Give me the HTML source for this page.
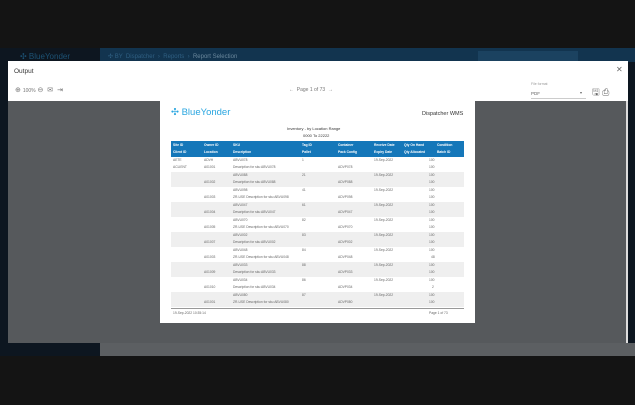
<!DOCTYPE html>
<html><head><style>
*{margin:0;padding:0;box-sizing:border-box}
body{width:635px;height:405px;background:#141414;position:relative;overflow:hidden;font-family:"Liberation Sans",sans-serif}
.abs{position:absolute}
.t{position:absolute;font-size:3.3px;color:#666;white-space:nowrap}
.h{position:absolute;font-size:3.3px;color:#fff;font-weight:bold;white-space:nowrap}
</style></head><body>
<div class="abs" style="left:0;top:48px;width:635px;height:308px;background:#0d1620"></div>
<div class="abs" style="left:100px;top:48px;width:535px;height:14px;background:#12344f"></div>
<div class="abs" style="left:20px;top:52px;font-size:8px;color:#1d5274">✣ BlueYonder</div>
<div class="abs" style="left:108px;top:53px;font-size:6px;color:#2f5f82">✣ BY &nbsp;Dispatcher &nbsp;› &nbsp;Reports &nbsp;› &nbsp;<span style="color:#6a879c">Report Selection</span></div>
<div class="abs" style="left:478px;top:51px;width:100px;height:11px;background:#1b4260"></div>
<div class="abs" style="left:100px;top:343px;width:535px;height:13px;background:#5c5f62"></div>
<!-- modal -->
<div class="abs" style="left:8px;top:61px;width:620px;height:40px;background:#fff"></div>
<div class="abs" style="left:14px;top:68px;font-size:6.5px;color:#333">Output</div>
<div class="abs" style="left:616px;top:65px;font-size:8px;color:#666">✕</div>
<div class="abs" style="left:15px;top:86px;font-size:7px;color:#777">⊕ <span style="font-size:5px">100%</span> ⊖ &nbsp;✉ &nbsp;⇥</div>
<div class="abs" style="left:289px;top:87px;font-size:5px;color:#777">← &nbsp;Page 1 of 73 &nbsp;→</div>
<div class="abs" style="left:531px;top:82px;font-size:3.5px;color:#999">File format</div>
<div class="abs" style="left:531px;top:91px;font-size:4.5px;color:#666">PDF</div>
<div class="abs" style="left:531px;top:98px;width:55px;height:1px;background:#ccc"></div>
<div class="abs" style="left:580px;top:90px;font-size:4px;color:#666">▾</div>
<div class="abs" style="left:592px;top:85px;font-size:9px;color:#666">🖫 ⎙</div>
<div class="abs" style="left:8px;top:101px;width:620px;height:242px;background:#56595c"></div>
<div class="abs" style="left:626px;top:101px;width:2px;height:242px;background:#ddd"></div>
<!-- page -->
<div class="abs" style="left:160px;top:101px;width:315px;height:222px;background:#fff"></div>
<div class="abs" style="left:171px;top:107px;font-size:9.5px;color:#2aa6e0">✣ BlueYonder</div>
<div class="abs" style="left:422px;top:111px;font-size:5.5px;color:#333">Dispatcher WMS</div>
<div class="abs" style="left:287px;top:126px;font-size:4px;color:#333">Inventory - by Location Range</div>
<div class="abs" style="left:303px;top:133px;font-size:4px;color:#333">0000 To 22222</div>
<div class="abs" style="left:171px;top:141px;width:293px;height:16px;background:#1577b9"></div>
<div class="h" style="left:173px;top:143px">Site ID</div><div class="h" style="left:173px;top:150px">Client ID</div>
<div class="h" style="left:204px;top:143px">Owner ID</div><div class="h" style="left:204px;top:150px">Location</div>
<div class="h" style="left:233px;top:143px">SKU</div><div class="h" style="left:233px;top:150px">Description</div>
<div class="h" style="left:302px;top:143px">Tag ID</div><div class="h" style="left:302px;top:150px">Pallet</div>
<div class="h" style="left:338px;top:143px">Container</div><div class="h" style="left:338px;top:150px">Pack Config</div>
<div class="h" style="left:374px;top:143px">Receive Date</div><div class="h" style="left:374px;top:150px">Expiry Date</div>
<div class="h" style="left:404px;top:143px">Qty On Hand</div><div class="h" style="left:404px;top:150px">Qty Allocated</div>
<div class="h" style="left:437px;top:143px">Condition</div><div class="h" style="left:437px;top:150px">Batch ID</div>
<div class="abs" style="left:171px;top:172px;width:293px;height:15px;background:#efefef"></div>
<div class="abs" style="left:171px;top:202px;width:293px;height:15px;background:#efefef"></div>
<div class="abs" style="left:171px;top:232px;width:293px;height:15px;background:#efefef"></div>
<div class="abs" style="left:171px;top:262px;width:293px;height:15px;background:#efefef"></div>
<div class="abs" style="left:171px;top:292px;width:293px;height:15px;background:#efefef"></div>
<div class="t" style="left:173px;top:158px">AETE</div><div class="t" style="left:173px;top:165px">ACLIENT</div>
<div class="t" style="left:204px;top:158px">ADVH</div>
<div class="t" style="left:204px;top:165px">A01001</div>
<div class="t" style="left:204px;top:180px">A01002</div>
<div class="t" style="left:204px;top:195px">A01003</div>
<div class="t" style="left:204px;top:210px">A01004</div>
<div class="t" style="left:204px;top:225px">A01005</div>
<div class="t" style="left:204px;top:240px">A01007</div>
<div class="t" style="left:204px;top:255px">A01003</div>
<div class="t" style="left:204px;top:270px">A01009</div>
<div class="t" style="left:204px;top:285px">A01010</div>
<div class="t" style="left:204px;top:300px">A01001</div>
<div class="t" style="left:233px;top:158px">ABVU078</div><div class="t" style="left:233px;top:165px">Description for sku ABVU078</div>
<div class="t" style="left:233px;top:173px">ABVU088</div><div class="t" style="left:233px;top:180px">Description for sku ABVU088</div>
<div class="t" style="left:233px;top:188px">ABVU098</div><div class="t" style="left:233px;top:195px">ZR-USE Description for sku ABVU098</div>
<div class="t" style="left:233px;top:203px">ABVU047</div><div class="t" style="left:233px;top:210px">Description for sku ABVU047</div>
<div class="t" style="left:233px;top:218px">ABVU070</div><div class="t" style="left:233px;top:225px">ZR-USE Description for sku ABVU070</div>
<div class="t" style="left:233px;top:233px">ABVU002</div><div class="t" style="left:233px;top:240px">Description for sku ABVU002</div>
<div class="t" style="left:233px;top:248px">ABVU048</div><div class="t" style="left:233px;top:255px">ZR-USE Description for sku ABVU048</div>
<div class="t" style="left:233px;top:263px">ABVU033</div><div class="t" style="left:233px;top:270px">Description for sku ABVU033</div>
<div class="t" style="left:233px;top:278px">ABVU034</div><div class="t" style="left:233px;top:285px">Description for sku ABVU034</div>
<div class="t" style="left:233px;top:293px">ABVU080</div><div class="t" style="left:233px;top:300px">ZR-USE Description for sku ABVU080</div>
<div class="t" style="left:302px;top:158px">1</div><div class="t" style="left:302px;top:173px">21</div><div class="t" style="left:302px;top:188px">41</div><div class="t" style="left:302px;top:203px">61</div><div class="t" style="left:302px;top:218px">82</div><div class="t" style="left:302px;top:233px">83</div><div class="t" style="left:302px;top:248px">84</div><div class="t" style="left:302px;top:263px">88</div><div class="t" style="left:302px;top:278px">86</div><div class="t" style="left:302px;top:293px">87</div>
<div class="t" style="left:338px;top:165px">ADVP078</div><div class="t" style="left:338px;top:180px">ADVP088</div><div class="t" style="left:338px;top:195px">ADVP098</div><div class="t" style="left:338px;top:210px">ADVP047</div><div class="t" style="left:338px;top:225px">ADVP070</div><div class="t" style="left:338px;top:240px">ADVP002</div><div class="t" style="left:338px;top:255px">ADVP048</div><div class="t" style="left:338px;top:270px">ADVP033</div><div class="t" style="left:338px;top:285px">ADVP034</div><div class="t" style="left:338px;top:300px">ADVP080</div>
<div class="t" style="left:374px;top:158px">19-Sep-2022</div><div class="t" style="left:374px;top:173px">19-Sep-2022</div><div class="t" style="left:374px;top:188px">19-Sep-2022</div><div class="t" style="left:374px;top:203px">19-Sep-2022</div><div class="t" style="left:374px;top:218px">19-Sep-2022</div><div class="t" style="left:374px;top:233px">19-Sep-2022</div><div class="t" style="left:374px;top:248px">19-Sep-2022</div><div class="t" style="left:374px;top:263px">19-Sep-2022</div><div class="t" style="left:374px;top:278px">19-Sep-2022</div><div class="t" style="left:374px;top:293px">19-Sep-2022</div>
<div class="t" style="left:429px;top:158px">100</div><div class="t" style="left:429px;top:165px">100</div><div class="t" style="left:429px;top:173px">100</div><div class="t" style="left:429px;top:180px">100</div><div class="t" style="left:429px;top:188px">100</div><div class="t" style="left:429px;top:195px">100</div><div class="t" style="left:429px;top:203px">100</div><div class="t" style="left:429px;top:210px">100</div><div class="t" style="left:429px;top:218px">100</div><div class="t" style="left:429px;top:225px">100</div><div class="t" style="left:429px;top:233px">100</div><div class="t" style="left:429px;top:240px">100</div><div class="t" style="left:429px;top:248px">100</div><div class="t" style="left:431px;top:255px">48</div><div class="t" style="left:429px;top:263px">100</div><div class="t" style="left:429px;top:270px">100</div><div class="t" style="left:429px;top:278px">100</div><div class="t" style="left:432px;top:285px">2</div><div class="t" style="left:429px;top:293px">100</div><div class="t" style="left:429px;top:300px">100</div>
<div class="abs" style="left:171px;top:308px;width:293px;height:1px;background:#999"></div>
<div class="t" style="left:173px;top:311px">19-Sep-2022 10:35:14</div>
<div class="t" style="left:429px;top:311px">Page 1 of 73</div>
</body></html>
